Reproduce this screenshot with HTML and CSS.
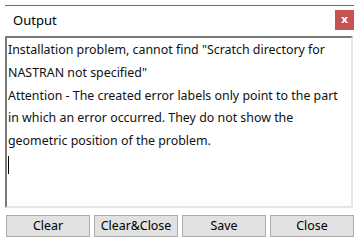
FILE: index.html
```html
<!DOCTYPE html>
<html>
<head>
<meta charset="utf-8">
<link rel="stylesheet" href="styles.css">
</head>
<body>
<div class="win">
  <div class="titlebar">
    <span class="title">Output</span>
    <button class="xbtn">x</button>
  </div>
  <div class="log">
    <div class="line">Installation problem, cannot find "Scratch directory for</div>
    <div class="line">NASTRAN not specified"</div>
    <div class="line">Attention - The created error labels only point to the part</div>
    <div class="line">in which an error occurred. They do not show the</div>
    <div class="line">geometric position of the problem.</div>
    <div class="line"><span class="caret"></span></div>
  </div>
  <div class="actions">
    <button class="btn">Clear</button>
    <button class="btn">Clear&amp;Close</button>
    <button class="btn">Save</button>
    <button class="btn">Close</button>
  </div>
</div>
</body>
</html>
```
FILE: styles.css
```css
html, body {
  margin: 0;
  padding: 0;
  background: #ffffff;
}
body {
  width: 359px;
  height: 241px;
  overflow: hidden;
  font-family: "Noto Sans", "Open Sans", sans-serif;
  color: #000;
}
.win {
  padding: 5px 5px 0 5px;
}
.titlebar {
  border-top: 1px solid #2b7dcb;
  height: 30px;
  display: flex;
  align-items: center;
  justify-content: space-between;
}
.title {
  font-size: 13px;
  padding-left: 8px;
  margin-top: -2px;
}
.xbtn {
  width: 19px;
  height: 20px;
  margin-top: -2px;
  background: #c75252;
  border: none;
  padding: 0;
  color: #fff;
  font-weight: bold;
  font-family: "DejaVu Sans", sans-serif;
  font-size: 11px;
  line-height: 18px;
}
.log {
  margin-right: 1px;
  height: 165px;
  border-top: 2px solid #7a7a7a;
  border-left: 2px solid #7a7a7a;
  border-right: 2px solid #e6e6e6;
  border-bottom: 2px solid #e6e6e6;
  padding: 1px 0 2px 1px;
  font-size: 12.4px;
  line-height: 22.8px;
  white-space: nowrap;
  overflow: hidden;
  color: #111;
}
.caret {
  display: inline-block;
  width: 1px;
  height: 18px;
  background: #000;
  vertical-align: middle;
}
.actions {
  display: grid;
  grid-template-columns: repeat(4, 84px);
  column-gap: 4px;
  margin-top: 7px;
  padding-left: 1px;
}
.btn {
  height: 22px;
  background: #e1e1e1;
  border: 1px solid #adadad;
  font-family: "Noto Sans", "Open Sans", sans-serif;
  font-size: 12.4px;
  color: #000;
  padding: 0;
  line-height: 18px;
}
```
